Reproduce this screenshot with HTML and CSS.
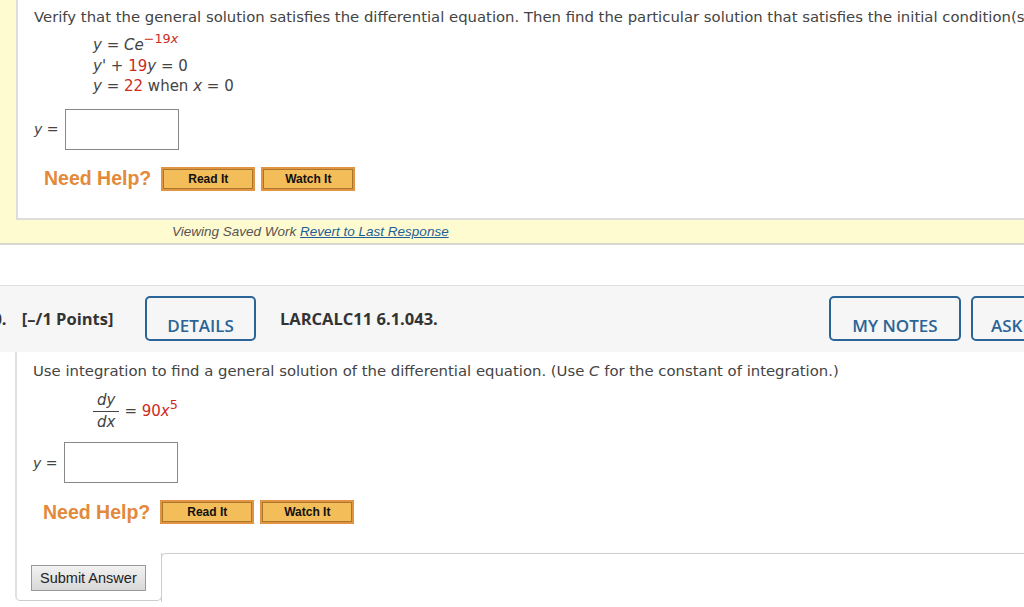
FILE: index.html
```html
<!DOCTYPE html>
<html lang="en">
<head>
  <meta charset="UTF-8" />
  <title>Assignment</title>
  <link rel="stylesheet" href="styles.css">
</head>
<body>

  <!-- Previous question (saved work) -->
  <div class="saved-question">
    <div class="question-body">
      <p class="prompt">Verify that the general solution satisfies the differential equation. Then find the particular solution that satisfies the initial condition(s).</p>
      <div class="math-block">
        <div><i>y</i> = <i>Ce</i><sup class="red">&minus;19<i>x</i></sup></div>
        <div><i>y</i>' + <span class="red">19</span><i>y</i> = 0</div>
        <div><i>y</i> = <span class="red">22</span> when <i>x</i> = 0</div>
      </div>
      <div class="answer-row">
        <span class="answer-label"><i>y</i> =</span>
        <input class="answer-input" type="text">
      </div>
      <div class="help-row">
        <span class="need-help">Need Help?</span>
        <button class="help-btn">Read It</button>
        <button class="help-btn">Watch It</button>
      </div>
    </div>
    <div class="saved-note">Viewing Saved Work <a href="#">Revert to Last Response</a></div>
  </div>

  <!-- Current question -->
  <div class="question-header">
    <span class="q-points"><span class="q-num">10.</span> [&ndash;/1 Points]</span>
    <button class="outline-btn details-btn">DETAILS</button>
    <span class="q-code">LARCALC11 6.1.043.</span>
    <span class="spacer"></span>
    <button class="outline-btn notes-btn">MY NOTES</button>
    <button class="outline-btn ask-btn">ASK YOUR TEACHER</button>
  </div>

  <div class="question">
    <div class="question-main">
      <p class="prompt">Use integration to find a general solution of the differential equation. (Use <i>C</i> for the constant of integration.)</p>
      <div class="math-block fraction-line">
        <span class="frac">
          <span class="frac-top"><i>dy</i></span>
          <span class="frac-bottom"><i>dx</i></span>
        </span>
        <span>= <span class="red">90<i>x</i><sup>5</sup></span></span>
      </div>
      <div class="answer-row">
        <span class="answer-label"><i>y</i> =</span>
        <input class="answer-input" type="text">
      </div>
      <div class="help-row">
        <span class="need-help">Need Help?</span>
        <button class="help-btn">Read It</button>
        <button class="help-btn">Watch It</button>
      </div>
    </div>
    <div class="question-footer">
      <div class="submit-tab">
        <button class="submit-btn">Submit Answer</button>
      </div>
      <div class="footer-rest"></div>
    </div>
  </div>

</body>
</html>
```

FILE: styles.css
```css
body {
  margin: 0;
  background: #fff;
  font-family: 'DejaVu Sans', Verdana, sans-serif;
  color: #444;
  overflow: hidden;
}

.red {
  color: #cc2b1d;
}

sup {
  font-size: 0.85em;
  line-height: 0;
  vertical-align: 0.55em;
}

/* Saved question */
.saved-question {
  background: #fffbd0;
  border-bottom: 2px solid #d8d8d0;
}

.question-body {
  background: #fff;
  margin-left: 16px;
  border-left: 2px solid #ddd;
  border-bottom: 2px solid #ddd;
  padding: 7px 0 0 16px;
  height: 220px;
  box-sizing: border-box;
  white-space: nowrap;
}

.prompt {
  margin: 0;
  font-size: 14.85px;
  line-height: 20px;
}

.math-block {
  margin: 8px 0 0 59px;
  font-size: 15px;
  line-height: 20.5px;
}

.answer-row {
  display: flex;
  align-items: center;
  margin-top: 12px;
}

.answer-label {
  font-size: 14px;
  width: 31px;
}

.answer-input {
  width: 114px;
  height: 41px;
  box-sizing: border-box;
  border: 1px solid #888;
  margin: 0;
}

.help-row {
  display: flex;
  align-items: center;
  margin-top: 17px;
  margin-left: 10px;
}

.need-help {
  font-family: 'Liberation Sans', Arial, sans-serif;
  font-weight: bold;
  font-size: 19.5px;
  color: #e3893a;
  margin-right: 10px;
}

.help-btn {
  width: 94px;
  height: 24px;
  margin-right: 6px;
  border: 2px solid #e39440;
  box-shadow: inset 0 0 0 1px #a8762f;
  background: #f3bd5a;
  font-family: 'Liberation Sans', Arial, sans-serif;
  font-weight: bold;
  font-size: 12px;
  color: #111;
  padding: 0;
}

.saved-note {
  height: 23px;
  line-height: 23px;
  padding-left: 172px;
  font-family: 'Liberation Sans', Arial, sans-serif;
  font-style: italic;
  font-size: 13.5px;
  color: #555;
}

.saved-note a {
  color: #1d5e98;
}

/* Current question header */
.question-header {
  margin-top: 40px;
  border-top: 1px solid #e0e0e0;
  background: #f6f6f6;
  height: 66px;
  display: flex;
  align-items: flex-start;
  font-family: 'Open Sans', sans-serif;
  white-space: nowrap;
}

.q-points {
  font-weight: bold;
  font-size: 16.5px;
  color: #333;
  margin-left: -17px;
  margin-top: 21px;
  width: 162px;
}

.q-num {
  margin-right: 11px;
}

.outline-btn {
  flex: none;
  margin-top: 10px;
  height: 45px;
  border: 2px solid #2b6496;
  border-radius: 5px;
  background: #f6f6f6;
  color: #2b6496;
  font-family: 'Open Sans', sans-serif;
  font-weight: 600;
  font-size: 17px;
  padding: 14px 0 0;
}

.details-btn {
  width: 111px;
}

.q-code {
  font-weight: bold;
  font-size: 16.5px;
  color: #333;
  margin-left: 24px;
  margin-top: 21px;
}

.spacer {
  flex: 1;
}

.notes-btn {
  width: 132px;
  margin-right: 10px;
}

.ask-btn {
  width: 200px;
  margin-right: -147px;
  text-align: left;
  padding-left: 18px;
}

/* Current question body */
.question {
  margin-left: 15px;
}

.question-main {
  border-left: 2px solid #e0e0e0;
  padding: 9px 0 29px 16px;
  white-space: nowrap;
}

.question-main .math-block {
  margin-top: 10px;
  margin-left: 60px;
}

.fraction-line {
  display: flex;
  align-items: center;
  gap: 5px;
}

.frac {
  display: inline-flex;
  flex-direction: column;
  align-items: center;
  line-height: 19px;
}

.frac-top {
  border-bottom: 1px solid #444;
  padding: 0 4px 1px;
}

.frac-bottom {
  padding-top: 1px;
}

.question-main .answer-row {
  margin-top: 10px;
}

.question-main .help-row {
  margin-top: 17px;
}

.question-footer {
  display: flex;
}

.submit-tab {
  width: 147px;
  height: 48px;
  border: 1px solid #ccc;
  border-top: none;
  border-left-width: 2px;
  border-left-color: #e0e0e0;
  border-radius: 0 0 5px 5px;
  padding: 12px 0 0 14px;
  box-sizing: border-box;
}

.footer-rest {
  flex: 1;
  height: 48px;
  border-top: 1px solid #ccc;
  border-left: 1px solid #ccc;
  border-radius: 5px 0 0 0;
  margin-left: -1px;
}

.submit-btn {
  display: block;
  height: 26px;
  padding: 0 8px;
  border: 1px solid #999;
  background: linear-gradient(#f2f2f2, #d8d8d8);
  font-family: 'Liberation Sans', Arial, sans-serif;
  font-size: 14.5px;
  color: #222;
}
```
